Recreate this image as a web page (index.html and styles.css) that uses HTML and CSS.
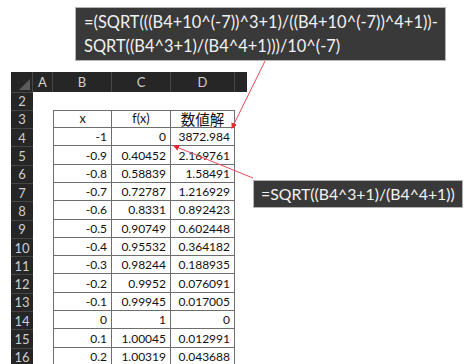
FILE: index.html
```html
<!DOCTYPE html>
<html lang="ja">
<head>
<meta charset="utf-8">
<title>数値微分</title>
<link rel="stylesheet" href="styles.css">
</head>
<body>
<div class="page">
  <div class="sheet">
    <div class="ch corner"><span class="tri"></span></div>
    <div class="ch">A</div>
    <div class="ch">B</div>
    <div class="ch">C</div>
    <div class="ch">D</div>
    <div class="ch last"></div>

    <div class="rh">2</div><div class="c"></div><div class="c"></div><div class="c"></div><div class="c"></div><div class="c"></div>

    <div class="rh">3</div><div class="c"></div><div class="t first top hd">x</div><div class="t top hd">f(x)</div><div class="t top hd cjk">数値解</div><div class="c"></div>

    <div class="rh">4</div><div class="c"></div><div class="t first">-1</div><div class="t">0</div><div class="t">3872.984</div><div class="c"></div>
    <div class="rh">5</div><div class="c"></div><div class="t first">-0.9</div><div class="t">0.40452</div><div class="t">2.169761</div><div class="c"></div>
    <div class="rh">6</div><div class="c"></div><div class="t first">-0.8</div><div class="t">0.58839</div><div class="t">1.58491</div><div class="c"></div>
    <div class="rh">7</div><div class="c"></div><div class="t first">-0.7</div><div class="t">0.72787</div><div class="t">1.216929</div><div class="c"></div>
    <div class="rh">8</div><div class="c"></div><div class="t first">-0.6</div><div class="t">0.8331</div><div class="t">0.892423</div><div class="c"></div>
    <div class="rh">9</div><div class="c"></div><div class="t first">-0.5</div><div class="t">0.90749</div><div class="t">0.602448</div><div class="c"></div>
    <div class="rh">10</div><div class="c"></div><div class="t first">-0.4</div><div class="t">0.95532</div><div class="t">0.364182</div><div class="c"></div>
    <div class="rh">11</div><div class="c"></div><div class="t first">-0.3</div><div class="t">0.98244</div><div class="t">0.188935</div><div class="c"></div>
    <div class="rh">12</div><div class="c"></div><div class="t first">-0.2</div><div class="t">0.9952</div><div class="t">0.076091</div><div class="c"></div>
    <div class="rh">13</div><div class="c"></div><div class="t first">-0.1</div><div class="t">0.99945</div><div class="t">0.017005</div><div class="c"></div>
    <div class="rh">14</div><div class="c"></div><div class="t first">0</div><div class="t">1</div><div class="t">0</div><div class="c"></div>
    <div class="rh">15</div><div class="c"></div><div class="t first">0.1</div><div class="t">1.00045</div><div class="t">0.012991</div><div class="c"></div>
    <div class="rh">16</div><div class="c"></div><div class="t first">0.2</div><div class="t">1.00319</div><div class="t">0.043688</div><div class="c"></div>
  </div>

  <div class="callout callout-main">=(SQRT(((B4+10^(-7))^3+1)/((B4+10^(-7))^4+1))-<br>SQRT((B4^3+1)/(B4^4+1)))/10^(-7)</div>
  <div class="callout callout-fx">=SQRT((B4^3+1)/(B4^4+1))</div>

  <svg class="arrows" width="474" height="364" viewBox="0 0 474 364">
    <defs>
      <marker id="ah" markerWidth="6" markerHeight="6" refX="5" refY="3" orient="auto" markerUnits="userSpaceOnUse">
        <path d="M0,0 L6,3 L0,6 Z" fill="#e8262b"/>
      </marker>
    </defs>
    <line x1="265" y1="61" x2="232" y2="128" stroke="#ea4a55" stroke-width="1" marker-end="url(#ah)"/>
    <line x1="253" y1="178" x2="174" y2="146" stroke="#ea4a55" stroke-width="1" marker-end="url(#ah)"/>
  </svg>
</div>
</body>
</html>
```

FILE: styles.css
```css
html, body {
  margin: 0;
  padding: 0;
  background: #ffffff;
}
body {
  width: 474px;
  height: 364px;
  overflow: hidden;
}
.page {
  position: relative;
  width: 474px;
  height: 364px;
  padding: 72px 0 0 11px;
  box-sizing: border-box;
}
.sheet {
  display: grid;
  grid-template-columns: 22px 20px 59px 59px 64px 12px;
  grid-template-rows: 19.5px repeat(15, 18.3px);
  font-family: Lato, "Noto Sans CJK JP", sans-serif;
  font-size: 12px;
  color: #111111;
}
.ch {
  background: #262626;
  color: #cfcfcf;
  display: flex;
  align-items: center;
  justify-content: center;
  border-right: 1px solid #474747;
  box-sizing: border-box;
  font-size: 13px;
}
.ch.last {
  border-right: none;
}
.corner {
  position: relative;
  border-right: 1px solid #474747;
}
.tri {
  position: absolute;
  right: 2px;
  bottom: 2px;
  width: 0;
  height: 0;
  border-left: 11px solid transparent;
  border-bottom: 11px solid #5c5c5c;
}
.rh {
  background: #262626;
  color: #cfcfcf;
  display: flex;
  align-items: center;
  justify-content: center;
  border-top: 1px solid #454545;
  box-sizing: border-box;
  font-size: 13px;
}
.c {
  background: #ffffff;
}
.t {
  background: #ffffff;
  border-right: 1px solid #6e6e6e;
  border-bottom: 1px solid #6e6e6e;
  box-sizing: border-box;
  display: flex;
  align-items: center;
  justify-content: flex-end;
  padding-right: 4px;
  white-space: nowrap;
}
.t.first {
  border-left: 1px solid #6e6e6e;
}
.t.top {
  border-top: 1px solid #6e6e6e;
}
.t.hd {
  justify-content: center;
  padding-right: 0;
  font-size: 12.5px;
}
.t.cjk {
  font-family: "Noto Sans CJK JP", sans-serif;
  font-size: 14.5px;
}
.callout {
  position: absolute;
  background: #393939;
  border: 1px solid #b5b5b5;
  box-sizing: border-box;
  color: #f2f2f2;
  font-family: Lato, sans-serif;
  white-space: nowrap;
}
.callout-main {
  left: 75px;
  top: 7px;
  width: 371px;
  height: 54px;
  padding: 2px 0 0 8px;
  font-size: 16.4px;
  line-height: 24px;
}
.callout-fx {
  left: 253px;
  top: 180px;
  width: 210px;
  height: 28px;
  padding: 0 0 0 7px;
  font-size: 15.8px;
  line-height: 26px;
}
.arrows {
  position: absolute;
  left: 0;
  top: 0;
  pointer-events: none;
}
```
